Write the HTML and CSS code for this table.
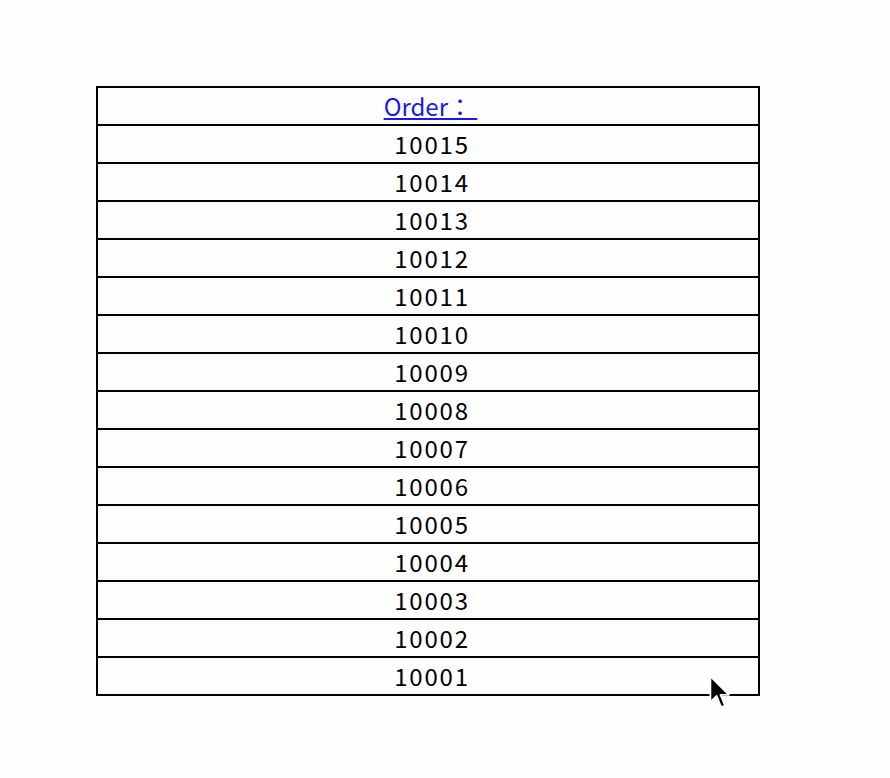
FILE: index.html
```html
<!DOCTYPE html>
<html>
<head>
<meta charset="utf-8">
<link rel="stylesheet" href="styles.css">
</head>
<body>
<div class="page">
<table class="orders">
<thead><tr><th><a href="#">Order：&nbsp;</a></th></tr></thead>
<tbody>
<tr><td>10015</td></tr>
<tr><td>10014</td></tr>
<tr><td>10013</td></tr>
<tr><td>10012</td></tr>
<tr><td>10011</td></tr>
<tr><td>10010</td></tr>
<tr><td>10009</td></tr>
<tr><td>10008</td></tr>
<tr><td>10007</td></tr>
<tr><td>10006</td></tr>
<tr><td>10005</td></tr>
<tr><td>10004</td></tr>
<tr><td>10003</td></tr>
<tr><td>10002</td></tr>
<tr><td>10001</td></tr>
</tbody>
</table>
</div>
<svg class="cursor" width="25" height="36" viewBox="0 0 22 32">
<path d="M2 2 L2 25 L7.5 19.5 L11.5 29.5 L15 28 L11 18.5 L18.5 18.5 Z" fill="#000" stroke="#fff" stroke-width="1.6" stroke-linejoin="round"/>
</svg>
</body>
</html>
```
FILE: styles.css
```css
html, body {
  margin: 0;
  padding: 0;
  background: #fefefe;
}
.page {
  padding: 86px 0 0 96px;
}
.orders {
  border-collapse: collapse;
  width: 664px;
  font-family: "Noto Sans CJK JP", "Noto Sans", sans-serif;
  font-size: 24px;
  color: #000;
}
.orders th, .orders td {
  border: 2px solid #000;
  height: 36px;
  padding: 0;
  text-align: center;
  font-weight: normal;
  line-height: 36px;
  box-sizing: border-box;
}
.orders th {
  padding-left: 5px;
}
.orders td {
  letter-spacing: 1.8px;
  padding-left: 8px;
}
.orders th a {
  color: #1a1ae6;
  text-decoration: underline;
}
.cursor {
  position: absolute;
  left: 708px;
  top: 674px;
}
```
